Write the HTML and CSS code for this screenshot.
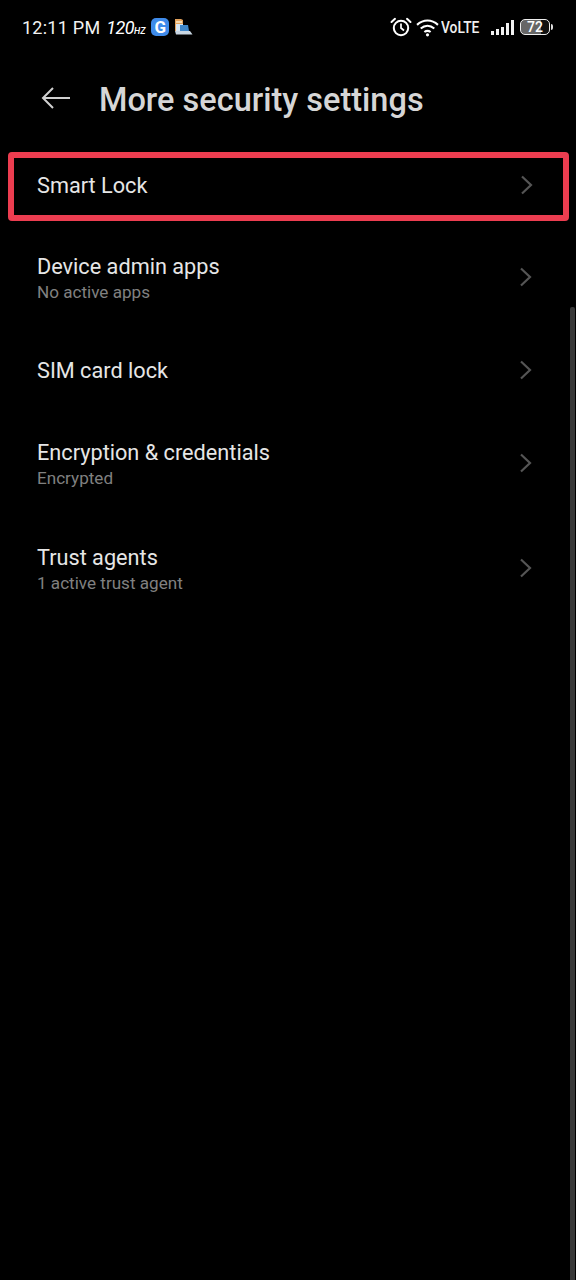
FILE: index.html
```html
<!DOCTYPE html>
<html lang="en">
<head>
<meta charset="utf-8">
<title>More security settings</title>
<link rel="stylesheet" href="styles.css">
</head>
<body>
<div class="phone">
  <header class="status">
    <div class="status-left">
      <span class="time">12:11 PM</span>
      <span class="hz">120<small>HZ</small></span>
      <span class="g-badge">G</span>
      <svg class="app-icon" width="20" height="18" viewBox="0 0 20 18"><path d="M2 1h6l2 1v11H2z" fill="#e3a25c"/><rect x="3" y="3" width="6" height="2" fill="#f4d9b0"/><rect x="3" y="6" width="7" height="7" fill="#d5e6f5"/><path d="M7 7h8l1 6H7z" fill="#3f86c8"/><path d="M2 13h15l2.500 3.500H3z" fill="#c9d6e2"/></svg>
    </div>
    <div class="status-right">
      <svg class="alarm" width="22" height="20" viewBox="0 0 22 20" fill="none" stroke="#fff" stroke-width="2"><circle cx="11" cy="11" r="7.200"/><path d="M11 6.500V11l3 2.500" stroke-width="1.700"/><path d="M1.500 5 5 1.800M20.500 5 17 1.800" stroke-linecap="round"/></svg>
      <svg class="wifi" width="23" height="19" viewBox="0 0 22 18" fill="none" stroke="#fff" stroke-width="2"><path d="M1 6.500c6-5.500 14-5.500 20 0"/><path d="M4.500 10c4-3.500 9-3.500 13 0"/><path d="M8 13.300c2-1.500 4-1.500 6 0"/><circle cx="11" cy="16" r="1.500" fill="#fff" stroke="none"/></svg>
      <span class="volte">VoLTE</span>
      <span class="signal"><i class="b1"></i><i class="b2"></i><i class="b3"></i><i class="b4"></i><i class="b5"></i></span>
      <span class="battery"><span class="batt-body">72</span><span class="batt-tip"></span></span>
    </div>
  </header>

  <div class="titlebar">
    <svg class="back" width="32" height="24" viewBox="0 0 32 24" fill="none" stroke="#d0d0d0" stroke-width="2"><path d="M30 12H3M13 2 3 12l10 10"/></svg>
    <h1>More security settings</h1>
  </div>

  <main class="list">
    <div class="row row-single row-marked">
      <div class="row-text"><div class="label">Smart Lock</div></div>
      <svg class="chev" width="14" height="20" viewBox="0 0 14 20" fill="none" stroke="#555" stroke-width="2.200"><path d="M2 1.500 11 10l-9 8.500"/></svg>
    </div>
    <div class="row row-double">
      <div class="row-text"><div class="label">Device admin apps</div><div class="sub">No active apps</div></div>
      <svg class="chev" width="14" height="20" viewBox="0 0 14 20" fill="none" stroke="#555" stroke-width="2.200"><path d="M2 1.500 11 10l-9 8.500"/></svg>
    </div>
    <div class="row row-single">
      <div class="row-text"><div class="label">SIM card lock</div></div>
      <svg class="chev" width="14" height="20" viewBox="0 0 14 20" fill="none" stroke="#555" stroke-width="2.200"><path d="M2 1.500 11 10l-9 8.500"/></svg>
    </div>
    <div class="row row-double">
      <div class="row-text"><div class="label">Encryption &amp; credentials</div><div class="sub">Encrypted</div></div>
      <svg class="chev" width="14" height="20" viewBox="0 0 14 20" fill="none" stroke="#555" stroke-width="2.200"><path d="M2 1.500 11 10l-9 8.500"/></svg>
    </div>
    <div class="row row-double">
      <div class="row-text"><div class="label">Trust agents</div><div class="sub">1 active trust agent</div></div>
      <svg class="chev" width="14" height="20" viewBox="0 0 14 20" fill="none" stroke="#555" stroke-width="2.200"><path d="M2 1.500 11 10l-9 8.500"/></svg>
    </div>
  </main>
  <div class="scrollbar"></div>
</div>
</body>
</html>
```
FILE: styles.css
```css
* { box-sizing: border-box; }
html, body { margin: 0; padding: 0; background: #000; }
body { font-family: Roboto, "Liberation Sans", sans-serif; }
.phone { position: relative; width: 576px; height: 1280px; background: #000; overflow: hidden; }

.status { display: flex; justify-content: space-between; align-items: center; height: 54px; padding: 0 23px 0 22px; color: #fff; }
.status-left, .status-right { display: flex; align-items: center; }
.time { font-size: 18px; color: #f2f2f2; letter-spacing: 0.25px; }
.hz { margin-left: 6px; width: 39px; font-size: 18px; font-style: italic; font-weight: 400; color: #fff; letter-spacing: -0.6px; white-space: nowrap; }
.hz small { font-size: 9px; font-weight: 500; letter-spacing: 0; }
.g-badge { display: flex; align-items: center; justify-content: center; width: 18px; height: 18px; margin-left: 6px; border-radius: 5px; background: #3f8bea; color: #fff; font-size: 17px; font-weight: 700; }
.app-icon { margin-left: 4px; }

.alarm { margin-right: 4px; }
.wifi { margin-right: 2px; }
.volte { font-size: 16px; font-weight: 500; color: #f0f0f0; transform: scaleX(0.86); transform-origin: left center; margin-right: 12px; width: 38px; }
.signal { display: flex; align-items: flex-end; gap: 2px; height: 16px; margin-right: 6px; }
.signal i { display: block; width: 3px; background: #f2f2f2; }
.b1 { height: 4px; } .b2 { height: 6px; } .b3 { height: 8px; } .b4 { height: 12px; } .b5 { height: 15px; }
.battery { display: flex; align-items: center; }
.batt-body { display: flex; align-items: center; justify-content: center; width: 30px; height: 16px; border: 1.500px solid #eee; border-radius: 5px; font-size: 14px; font-weight: 500; color: #fff; background: linear-gradient(90deg, #666 0 72%, #111 72%); }
.batt-tip { width: 2px; height: 6px; margin-left: 1px; background: #ddd; border-radius: 0 2px 2px 0; }

.titlebar { display: flex; align-items: center; height: 90px; padding: 0 0 0 40px; }
.back { flex: none; margin-bottom: 2px; }
h1 { margin: 2px 0 0 27px; font-size: 32.500px; font-weight: 500; color: #d6d6d6; line-height: 1; white-space: nowrap; }

.list { padding: 0; margin-top: 0; }
.row { display: flex; align-items: center; justify-content: space-between; padding: 0 43px 0 37px; }
.row-single { height: 81px; }
.row-single .row-text { padding-top: 2px; }
.row-double { height: 105px; }
.row-double .row-text { padding-top: 4px; }
.row-marked { height: 69px; margin: 8px 7px 3px 8px; padding: 0 29px 3px 23px; border: 6px solid #ec3d50; border-radius: 4px; }
.label { font-size: 21.700px; color: #e6e6e6; line-height: 26px; }
.sub { font-size: 17.100px; color: #808080; line-height: 22px; margin-top: 1px; }
.chev { flex: none; }
.scrollbar { position: absolute; right: 1px; top: 307px; bottom: 0; width: 5px; background: #383838; border-radius: 2px 2px 0 0; }
```
